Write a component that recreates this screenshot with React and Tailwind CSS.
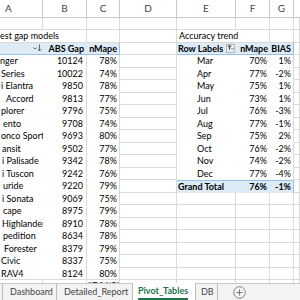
import React from 'react';

const COLS = 'grid grid-cols-[43px_44px_33px_57px_59px_34px_24px_1fr]';
const G = 'border-[#dadada]';

const p1 = [
  ['nger', '10124', '78%', 0],
  ['Series', '10022', '74%', 1],
  ['i Elantra', '9850', '78%', 1],
  ['Accord', '9813', '77%', 6],
  ['plorer', '9796', '75%', 1],
  ['ento', '9708', '74%', 3],
  ['onco Sport', '9693', '80%', 1],
  ['ansit', '9502', '77%', 2],
  ['i Palisade', '9342', '78%', 2],
  ['i Tuscon', '9242', '76%', 2],
  ['uride', '9220', '79%', 3],
  ['i Sonata', '9069', '75%', 2],
  ['cape', '8975', '79%', 3],
  ['Highlander', '8910', '78%', 2],
  ['pedition', '8634', '78%', 3],
  ['Forester', '8379', '79%', 4],
  ['Civic', '8337', '75%', 1],
  ['RAV4', '8124', '80%', 1],
];

const p2 = [
  ['Mar', '70%', '1%'],
  ['Apr', '77%', '-2%'],
  ['May', '75%', '1%'],
  ['Jun', '73%', '1%'],
  ['Jul', '76%', '-3%'],
  ['Aug', '77%', '-1%'],
  ['Sep', '75%', '2%'],
  ['Oct', '76%', '-2%'],
  ['Nov', '74%', '-2%'],
  ['Dec', '77%', '-4%'],
];

function C({ className = '', children, style }) {
  return (
    <div className={`h-full overflow-hidden whitespace-nowrap ${className}`} style={style}>
      {children}
    </div>
  );
}

function Row({ children }) {
  return <div className={`${COLS} h-[12.5px] leading-[12px] shrink-0`}>{children}</div>;
}

const grid = `border-r border-b ${G}`;

function SortBtn() {
  return (
    <svg width="9" height="8" viewBox="0 0 9 8" className="mr-[1px]">
      <path d="M0.5 3.5 L2 5 L3.5 3.5" fill="none" stroke="#555" strokeWidth="0.9" />
      <path d="M6.5 0.5 V7 M4.8 5.2 L6.5 7 L8.2 5.2" fill="none" stroke="#555" strokeWidth="0.9" />
    </svg>
  );
}

function FilterBtn() {
  return (
    <div className="w-[9px] h-[9px] border border-[#b8b8b8] bg-[#ececec] flex items-center justify-center ml-[3px]">
      <svg width="7" height="6" viewBox="0 0 7 6">
        <path d="M0.5 0.5 H4.5 L3 2.5 V5 L2 4.3 V2.5 Z" fill="#444" />
        <path d="M4.6 3.3 L5.5 4.3 L6.4 3.3" fill="none" stroke="#444" strokeWidth="0.8" />
      </svg>
    </div>
  );
}

export default function App() {
  const rows = [];
  rows.push(
    <Row key="r1">
      {Array.from({ length: 8 }).map((_, i) => (
        <C key={i} className={grid} />
      ))}
    </Row>
  );
  rows.push(
    <Row key="r2">
      <C className={`border-b ${G} overflow-visible relative z-10`}>
        <span>est gap models</span>
      </C>
      <C className={grid} />
      <C className={grid} />
      <C className={grid} />
      <C className={`border-b ${G} overflow-visible relative z-10 pl-[2px]`}>Accuracy trend</C>
      <C className={`border-b ${G} border-r`} />
      <C className={grid} />
      <C className={grid} />
    </Row>
  );
  rows.push(
    <Row key="r3">
      <C className="bg-[#ddebf7] border-b border-[#9bc2e6] flex items-center justify-end">
        <SortBtn />
      </C>
      <C className="bg-[#ddebf7] border-b border-[#9bc2e6] font-bold text-right pr-[3px]">ABS Gap</C>
      <C className={`bg-[#ddebf7] border-b border-[#9bc2e6] border-r font-bold text-right pr-[2px]`}>nMape</C>
      <C className={grid} />
      <C className="bg-[#ddebf7] border-b border-[#9bc2e6] font-bold pl-[1px] flex items-start">
        <span>Row Labels</span>
        <div className="pt-[1px]">
          <FilterBtn />
        </div>
      </C>
      <C className="bg-[#ddebf7] border-b border-[#9bc2e6] font-bold text-right pr-[2px]">nMape</C>
      <C className={`bg-[#ddebf7] border-b border-[#9bc2e6] border-r font-bold text-right pr-[2px]`}>BIAS</C>
      <C className={grid} />
    </Row>
  );
  for (let i = 0; i < 18; i++) {
    const [name, gap, mape, pl] = p1[i];
    let e, f, g, eCls, fCls, gCls;
    if (i < 10) {
      const m = p2[i];
      e = <span className="pl-[20px]">{m[0]}</span>;
      f = m[1];
      g = m[2];
      eCls = '';
      fCls = 'text-right pr-[3px]';
      gCls = `border-r ${G} text-right pr-[2px]`;
    } else if (i === 10) {
      e = <span className="pl-[1px]">Grand Total</span>;
      f = '76%';
      g = '-1%';
      eCls = 'bg-[#ddebf7] border-t border-[#9bc2e6] font-bold';
      fCls = 'bg-[#ddebf7] border-t border-[#9bc2e6] font-bold text-right pr-[3px]';
      gCls = `bg-[#ddebf7] border-t border-[#9bc2e6] border-r font-bold text-right pr-[2px]`;
    } else {
      e = null;
      f = null;
      g = null;
      eCls = grid;
      fCls = grid;
      gCls = grid;
    }
    const last = i === 17;
    rows.push(
      <Row key={'d' + i}>
        <C className={last ? `border-b ${G}` : ''} style={{ paddingLeft: pl }}>
          {name}
        </C>
        <C className={`border-r ${G} text-right pr-[3px] ${last ? 'border-b' : ''}`}>{gap}</C>
        <C className={`border-r ${G} text-right pr-[2px] ${last ? 'border-b' : ''}`}>{mape}</C>
        <C className={grid} />
        <C className={eCls}>{e}</C>
        <C className={fCls}>{f}</C>
        <C className={gCls}>{g}</C>
        <C className={grid} />
      </Row>
    );
  }
  rows.push(
    <Row key="r22">
      <C className={grid} />
      <C className={grid} />
      <C className={`${grid} text-right pr-[2px]`}>#DIV/0!</C>
      <C className={grid} />
      <C className={grid} />
      <C className={grid} />
      <C className={grid} />
      <C className={grid} />
    </Row>
  );

  return (
    <div
      className="w-[300px] h-[300px] overflow-hidden bg-white flex flex-col text-[9px] text-black"
      style={{ fontFamily: 'Lato, "Open Sans", sans-serif' }}
    >
      <div className="flex-1 overflow-hidden flex flex-col">
        <div className={`${COLS} h-[17.5px] shrink-0 text-[#444] text-[10px] leading-[17px]`}>
          <C className={`border-r border-b border-[#c8c8c8] pl-[5px]`}>A</C>
          <C className={`border-r border-b border-[#c8c8c8] text-center`}>B</C>
          <C className={`border-r border-b border-[#c8c8c8] text-center`}>C</C>
          <C className={`border-r border-b border-[#c8c8c8] text-center`}>D</C>
          <C className={`border-r border-b border-[#c8c8c8] text-center`}>E</C>
          <C className={`border-r border-b border-[#c8c8c8] text-center`}>F</C>
          <C className={`border-r border-b border-[#c8c8c8] text-center`}>G</C>
          <C className={`border-b border-[#c8c8c8]`} />
        </div>
        {rows}
      </div>
      <div className="h-[17px] shrink-0 bg-[#f3f3f3] border-t border-[#c8c8c8] flex items-stretch text-[9px] text-[#444] leading-[16px]">
        <div className="w-[3px] border-r border-[#bdbdbd]" />
        <div className="w-[54px] border-r border-[#bdbdbd] pl-[7px]">Dashboard</div>
        <div className="w-[76px] border-r border-[#bdbdbd] pl-[7px]">Detailed_Report</div>
        <div className="w-[63px] bg-white border-r border-[#bdbdbd] -mt-px flex flex-col items-start pl-[5px]">
          <span className="font-bold text-[#217346] leading-[15px] border-b-2 border-[#217346]">Pivot_Tables</span>
        </div>
        <div className="w-[22px] border-r border-[#bdbdbd] pl-[5px]">DB</div>
        <div className="flex items-center pl-[15px]">
          <svg width="13" height="13" viewBox="0 0 13 13">
            <circle cx="6.5" cy="6.5" r="5.8" fill="none" stroke="#777" strokeWidth="0.9" />
            <path d="M6.5 3.5 V9.5 M3.5 6.5 H9.5" stroke="#777" strokeWidth="1" />
          </svg>
        </div>
      </div>
    </div>
  );
}
